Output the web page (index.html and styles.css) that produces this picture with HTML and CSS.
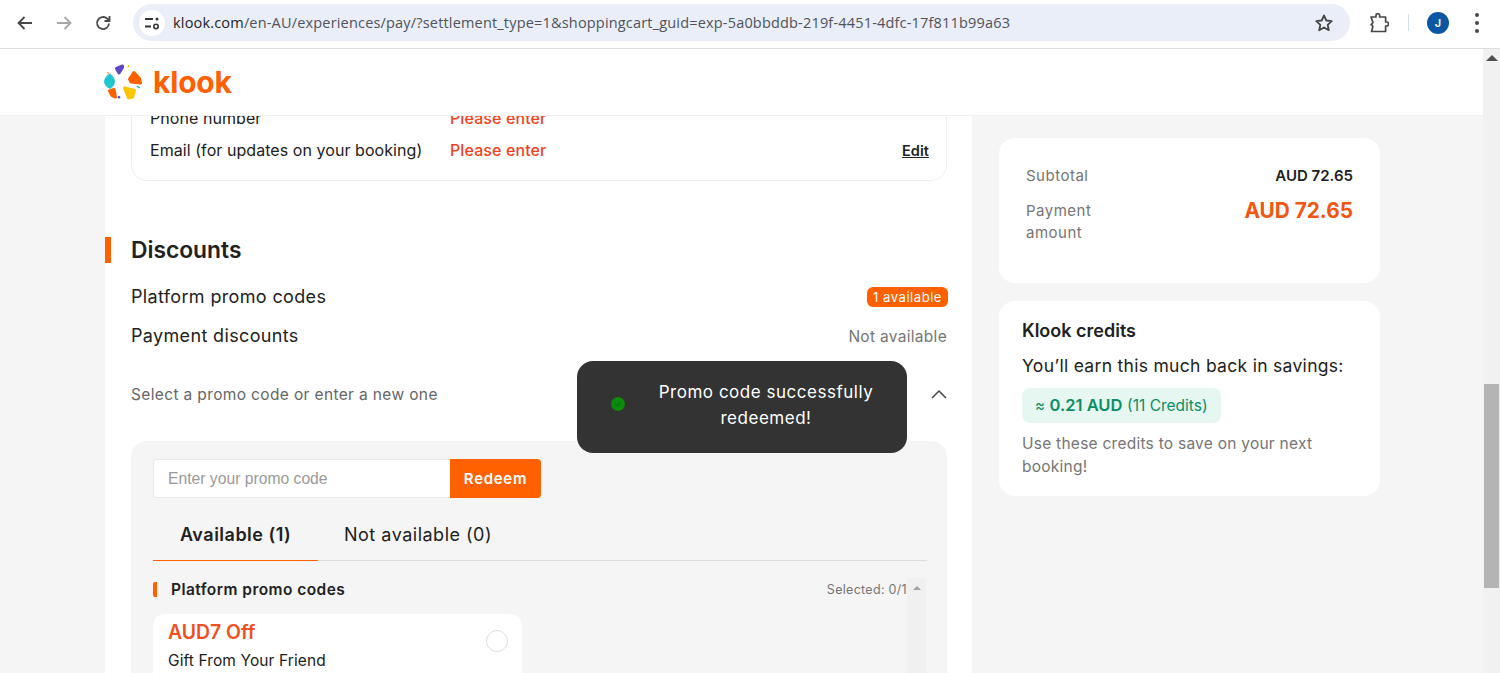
FILE: index.html
```html
<!DOCTYPE html>
<html lang="en">
<head>
  <meta charset="UTF-8">
  <title>Klook - Pay</title>
  <link rel="stylesheet" href="styles.css">
</head>
<body>

<div class="toolbar">
  <svg class="tool-icon" viewBox="0 0 20 20"><path d="M17 10H4M9.5 4L3.5 10l6 6" fill="none" stroke="#474747" stroke-width="1.8"/></svg>
  <svg class="tool-icon" viewBox="0 0 20 20"><path d="M3 10h13M10.5 4l6 6-6 6" fill="none" stroke="#a8a8a8" stroke-width="1.8"/></svg>
  <svg class="tool-icon" viewBox="0 0 20 20"><path d="M16 10.5a6 6 0 1 1-1.8-4.8L16 7.5M16.5 3v5h-5" fill="none" stroke="#474747" stroke-width="1.8"/></svg>
  <div class="omnibox">
    <span class="site-chip">
      <svg width="18" height="18" viewBox="0 0 18 18"><path d="M2 5h8M2 12.5h6" stroke="#333" stroke-width="1.8" fill="none"/><circle cx="14" cy="5" r="1.5" fill="#333"/><circle cx="13" cy="12.5" r="2.2" fill="none" stroke="#333" stroke-width="1.6"/></svg>
    </span>
    <span class="url"><b>klook.com</b>/en-AU/experiences/pay/?settlement_type=1&amp;shoppingcart_guid=exp-5a0bbddb-219f-4451-4dfc-17f811b99a63</span>
    <svg class="star" width="20" height="20" viewBox="0 0 20 20"><path d="M10 2.5l2.3 5 5.4.6-4 3.7 1.1 5.4L10 14.5l-4.8 2.7 1.1-5.4-4-3.7 5.4-.6z" fill="none" stroke="#474747" stroke-width="1.8" stroke-linejoin="round"/></svg>
  </div>
  <svg class="ext" width="20" height="20" viewBox="0 0 20 20"><path d="M2 4h5V2.500a1.800 1.800 0 0 1 3.600 0V4h6v5h1a2 2 0 0 1 0 4h-1v5.500H2.500l1-3.500c.8-2-.2-3-1.500-3.300L4 9.500z" fill="none" stroke="#474747" stroke-width="1.7" stroke-linejoin="round"/></svg>
  <span class="tool-divider"></span>
  <span class="avatar">J</span>
  <span class="dots"><i></i><i></i><i></i></span>
</div>

<div class="window">
  <div class="site">
    <header class="site-header">
      <svg class="logo-mark" width="40" height="40" viewBox="103 62 40 40" stroke-width="3" stroke-linejoin="round">
        <polygon points="116.500,68.500 122.500,66 122.500,67.500 119,73" fill="#5b48c8" stroke="#5b48c8"/>
        <polygon points="129.500,79 134,72.500 139.500,78.500 140.500,83 131,82" fill="#ff6000" stroke="#ff6000"/>
        <path d="M110 73.500C106 75.500 104 79 104 82C104.500 85.500 107 87.500 110 89C112.500 87.500 115 84.500 115 81.500C115 78.500 112.500 75.500 110 73.500Z" fill="#1fc6cf"/>
        <polygon points="109.500,91 114,89.500 115.500,97 112,95.500" fill="#ff6000" stroke="#ff6000"/>
        <polygon points="124.500,88 134.500,90.500 132.500,97 128.500,98" fill="#ffc400" stroke="#ffc400"/>
        <polygon points="137,85.500 140,87.200 139.300,88.500 136.500,86.800" fill="#1fb3a8"/>
        <circle cx="119" cy="97.300" r="1.300" fill="#5b48c8"/>
        <polygon points="107.500,72 109.500,73.200 108.900,74 107,72.800" fill="#ff6000"/>
        <polygon points="128,64.800 129.500,65.200 128.800,67.400 127.400,66.900" fill="#ffc400"/>
      </svg>
      <span class="logo-text">klook</span>
    </header>

    <div class="page">
      <main class="main-col">
        <div class="contact-card">
          <div class="contact-row">
            <span class="contact-label">Phone number</span>
            <span class="contact-value">Please enter</span>
          </div>
          <div class="contact-row">
            <span class="contact-label">Email (for updates on your booking)</span>
            <span class="contact-value">Please enter</span>
            <a class="edit-link">Edit</a>
          </div>
        </div>

        <h2 class="section-title">Discounts</h2>

        <div class="discount-row first">
          <span>Platform promo codes</span>
          <span class="tag">1 available</span>
        </div>
        <div class="discount-row second">
          <span>Payment discounts</span>
          <span class="muted">Not available</span>
        </div>
        <div class="select-row">
          <span>Select a promo code or enter a new one</span>
          <svg width="16" height="10" viewBox="0 0 16 10"><path d="M1 9l7-7 7 7" fill="none" stroke="#444" stroke-width="1.5"/></svg>
        </div>

        <div class="promo-panel">
          <div class="promo-form">
            <input class="promo-input" type="text" placeholder="Enter your promo code">
            <button class="redeem-btn">Redeem</button>
          </div>
          <div class="tabs">
            <div class="tab active">Available (1)</div>
            <div class="tab">Not available (0)</div>
          </div>
          <div class="promo-list">
            <div class="promo-items">
              <div class="promo-head">
                <span class="promo-head-title">Platform promo codes</span>
                <span class="promo-count">Selected: 0/1</span>
              </div>
              <div class="coupon">
                <div>
                  <div class="coupon-title">AUD7 Off</div>
                  <div class="coupon-desc">Gift From Your Friend</div>
                </div>
                <span class="radio"></span>
              </div>
            </div>
            <div class="inner-scroll"><span class="arrow-up small"></span></div>
          </div>
        </div>

        <div class="toast">
          <svg class="toast-icon" width="14" height="14" viewBox="0 0 14 14"><circle cx="7" cy="7" r="7" fill="#0b8a0b"/><path d="M4.5 7l2 2 3-3.500" fill="none" stroke="#0a5f0a" stroke-width="1"/></svg>
          <span class="toast-text">Promo code successfully redeemed!</span>
        </div>
      </main>

      <aside class="side-col">
        <div class="side-card summary">
          <div class="summary-row">
            <span>Subtotal</span>
            <b class="subtotal">AUD 72.65</b>
          </div>
          <div class="summary-row pay">
            <span class="pay-label">Payment amount</span>
            <b class="total">AUD 72.65</b>
          </div>
        </div>
        <div class="side-card credits">
          <div class="credits-title">Klook credits</div>
          <div class="credits-line">You’ll earn this much back in savings:</div>
          <div class="credits-badge"><span class="approx">≈</span> <b>0.21 AUD</b> <span class="credits-count">(11 Credits)</span></div>
          <p class="credits-note">Use these credits to save on your next booking!</p>
        </div>
      </aside>
    </div>
  </div>

  <div class="scrollbar">
    <span class="arrow-up"></span>
    <div class="scroll-thumb"></div>
  </div>
</div>

</body>
</html>
```

FILE: styles.css
```css
* {
  box-sizing: border-box;
}

body {
  margin: 0;
  height: 673px;
  overflow: hidden;
  background: #f5f5f5;
  color: #212121;
  font-family: "Inter", "Liberation Sans", sans-serif;
}

/* browser chrome */
.toolbar {
  height: 49px;
  display: flex;
  align-items: center;
  background: #fff;
  border-bottom: 1px solid #dedede;
  padding: 0 0 3px 15px;
}

.tool-icon {
  width: 20px;
  height: 20px;
  margin-right: 19px;
}

.omnibox {
  width: 1217px;
  height: 37px;
  margin-left: 1px;
  display: flex;
  align-items: center;
  background: #e9eef8;
  border-radius: 19px;
  padding: 0 16px 0 6px;
}

.site-chip {
  width: 26px;
  height: 26px;
  border-radius: 50%;
  background: #fff;
  display: flex;
  align-items: center;
  justify-content: center;
  flex: none;
}

.url {
  margin-left: 8px;
  flex: 1;
  font-family: "Open Sans", "Liberation Sans", sans-serif;
  font-size: 14.5px;
  letter-spacing: 0.18px;
  color: #50535a;
  white-space: nowrap;
}

.url b {
  font-weight: 400;
  color: #1f1f1f;
}

.ext {
  margin-left: 19px;
}

.tool-divider {
  width: 1px;
  height: 17px;
  background: #d3deee;
  margin: 0 18px 0 19px;
}

.avatar {
  width: 22px;
  height: 22px;
  border-radius: 50%;
  background: #0b57a4;
  color: #fff;
  font-size: 11px;
  font-weight: 600;
  display: flex;
  align-items: center;
  justify-content: center;
}

.dots {
  display: flex;
  flex-direction: column;
  gap: 4px;
  margin-left: 26px;
}

.dots i {
  width: 4px;
  height: 4px;
  border-radius: 50%;
  background: #474747;
}

/* page */
.window {
  display: flex;
  height: 624px;
}

.site {
  width: 1483px;
  flex: none;
  overflow: hidden;
}

.site-header {
  height: 67px;
  margin-bottom: -1px;
  background: #fff;
  border-bottom: 1px solid #f0f0f0;
  display: flex;
  align-items: center;
  padding-left: 103px;
  position: relative;
  z-index: 2;
}

.logo-text {
  margin-left: 10px;
  color: #ff6000;
  font-size: 30px;
  font-weight: 700;
  letter-spacing: -0.2px;
}

.page {
  display: flex;
  gap: 27px;
  padding-left: 105px;
}

.main-col {
  width: 867px;
  height: 560px;
  flex: none;
  background: #fff;
  padding: 0 25px 0 26px;
  position: relative;
}

.contact-card {
  margin-top: -15px;
  padding: 1px 17px 14px 18px;
  border: 1px solid #eeeeee;
  border-radius: 16px;
}

.contact-row {
  height: 32px;
  display: flex;
  align-items: center;
  font-size: 16px;
  letter-spacing: 0.06px;
}

.contact-label {
  width: 300px;
  white-space: nowrap;
}

.contact-value {
  color: #f0431e;
  font-weight: 500;
  letter-spacing: 0.1px;
}

.edit-link {
  margin-left: auto;
  font-weight: 600;
  font-size: 14.5px;
  text-decoration: underline;
  color: #212121;
}

.section-title {
  margin: 56px 0 0 -26px;
  height: 26px;
  border-left: 6px solid #ff6000;
  padding-left: 20px;
  font-size: 22.8px;
  line-height: 26px;
  font-weight: 600;
}

.discount-row {
  height: 32px;
  display: flex;
  align-items: center;
  justify-content: space-between;
  font-size: 18px;
  letter-spacing: 0.35px;
}

.discount-row.first {
  margin-top: 17px;
}

.discount-row.second {
  margin-top: 7px;
}

.tag {
  background: #ff6000;
  color: #fff;
  font-size: 13px;
  line-height: 20px;
  padding: 0 6px;
  margin: 2px -1px 0 0;
  border-radius: 6px;
  letter-spacing: 0.55px;
}

.muted {
  color: #757575;
  font-size: 15.5px;
  letter-spacing: 0.3px;
  margin-top: 3px;
}

.select-row {
  height: 32px;
  margin-top: 27px;
  display: flex;
  align-items: center;
  justify-content: space-between;
  font-size: 15.5px;
  letter-spacing: 0.36px;
  color: #666;
}

.promo-panel {
  margin-top: 31px;
  height: 300px;
  background: #f5f5f5;
  border-radius: 16px;
  padding: 18px 20px 0 22px;
}

.promo-form {
  display: flex;
  height: 39px;
}

.promo-input {
  width: 297px;
  height: 39px;
  border: 1px solid #e8e8e8;
  border-right: 0;
  border-radius: 3px 0 0 3px;
  padding: 0 14px;
  background: #fff;
  font-family: "Liberation Sans", Arial, sans-serif;
  font-size: 15.7px;
}

.promo-input::placeholder {
  color: #9a9a9a;
  opacity: 1;
}

.redeem-btn {
  width: 91px;
  height: 39px;
  border: 0;
  border-radius: 0 4px 4px 0;
  background: #ff6000;
  color: #fff;
  font-family: "Inter", sans-serif;
  font-size: 15px;
  font-weight: 600;
  letter-spacing: 0.7px;
}

.tabs {
  display: flex;
  align-items: flex-start;
  margin-top: 10px;
  height: 53px;
  border-bottom: 1px solid #dddddd;
}

.tab {
  height: 52px;
  display: flex;
  align-items: center;
  padding: 0 26px;
  font-size: 18px;
  letter-spacing: 0.5px;
}

.tab.active {
  font-weight: 600;
  width: 165px;
  height: 53px;
  padding-left: 27px;
  white-space: nowrap;
  border-bottom: 1px solid #ff6000;
}

.promo-list {
  display: flex;
  margin-top: 17px;
}

.promo-items {
  width: 754px;
  flex: none;
}

.promo-head {
  height: 22px;
  display: flex;
  align-items: center;
  justify-content: space-between;
}

.promo-head-title {
  border-left: 4px solid #ff6000;
  border-radius: 2px;
  padding-left: 14px;
  font-size: 15.5px;
  line-height: 15px;
  font-weight: 600;
  letter-spacing: 0.45px;
}

.promo-count {
  font-size: 12.5px;
  color: #757575;
  letter-spacing: 0.3px;
}

.coupon {
  width: 369px;
  margin-top: 14px;
  background: #fff;
  border-radius: 12px;
  padding: 5px 14px 20px 15px;
  display: flex;
  justify-content: space-between;
}

.coupon-title {
  color: #f0501e;
  font-size: 19.4px;
  line-height: 26px;
  font-weight: 600;
}

.coupon-desc {
  margin-top: 4px;
  font-size: 15.5px;
  line-height: 24px;
  letter-spacing: 0.1px;
}

.radio {
  width: 22px;
  height: 22px;
  margin-top: 11px;
  border: 1px solid #dddddd;
  border-radius: 50%;
}

.inner-scroll {
  width: 19px;
  height: 120px;
  background: #f0f0f0;
  display: flex;
  justify-content: center;
  padding-top: 8px;
}

.arrow-up {
  width: 0;
  height: 0;
  border-left: 6px solid transparent;
  border-right: 6px solid transparent;
  border-bottom: 6px solid #505050;
}

.arrow-up.small {
  border-left-width: 4px;
  border-right-width: 4px;
  border-bottom: 4px solid #a3a3a3;
}

.toast {
  position: absolute;
  left: 472px;
  top: 246px;
  width: 330px;
  height: 92px;
  background: #333333;
  border-radius: 16px;
  color: #fff;
  display: flex;
  align-items: center;
  padding-left: 34px;
}

.toast-icon {
  margin-bottom: 6px;
  flex: none;
}

.toast-text {
  width: 242px;
  margin: 0 0 4px 20px;
  text-align: center;
  font-size: 17px;
  line-height: 26px;
  letter-spacing: 0.52px;
}

/* sidebar */
.side-col {
  width: 381px;
  flex: none;
  padding-top: 23px;
}

.side-card {
  background: #fff;
  border-radius: 16px;
}

.summary {
  height: 145px;
  padding: 27px 27px 0;
  font-size: 15px;
  color: #757575;
  letter-spacing: 0.5px;
}

.summary-row {
  display: flex;
  justify-content: space-between;
  line-height: 22px;
}

.summary-row.pay {
  margin-top: 13px;
}

.pay-label {
  width: 90px;
}

.subtotal {
  color: #212121;
  font-size: 15px;
  font-weight: 600;
  letter-spacing: 0;
}

.total {
  color: #f2560f;
  font-size: 20.8px;
  font-weight: 700;
  letter-spacing: 0;
}

.credits {
  margin-top: 18px;
  height: 195px;
  padding: 18px 22px 0 23px;
}

.credits-title {
  font-size: 18px;
  line-height: 24px;
  font-weight: 600;
}

.credits-line {
  margin-top: 11px;
  font-size: 17.5px;
  line-height: 24px;
  white-space: nowrap;
  letter-spacing: 0.3px;
}

.credits-badge {
  width: 199px;
  height: 35px;
  margin-top: 10px;
  padding-left: 13px;
  background: #e6f6f1;
  border-radius: 8px;
  color: #0a8f64;
  font-size: 16.5px;
  line-height: 35px;
  white-space: nowrap;
}

.credits-badge b {
  font-weight: 600;
}

.approx {
  font-size: 15px;
}

.credits-count {
  font-size: 15.5px;
}

.credits-note {
  margin: 9px 0 0;
  font-size: 15.5px;
  line-height: 23px;
  color: #757575;
  letter-spacing: 0.25px;
}

/* window scrollbar */
.scrollbar {
  width: 17px;
  flex: none;
  background: #f1f1f1;
  display: flex;
  flex-direction: column;
  align-items: center;
  padding-top: 6px;
}

.scroll-thumb {
  width: 15px;
  height: 204px;
  margin-top: 323px;
  background: #b4b4b4;
}
```
